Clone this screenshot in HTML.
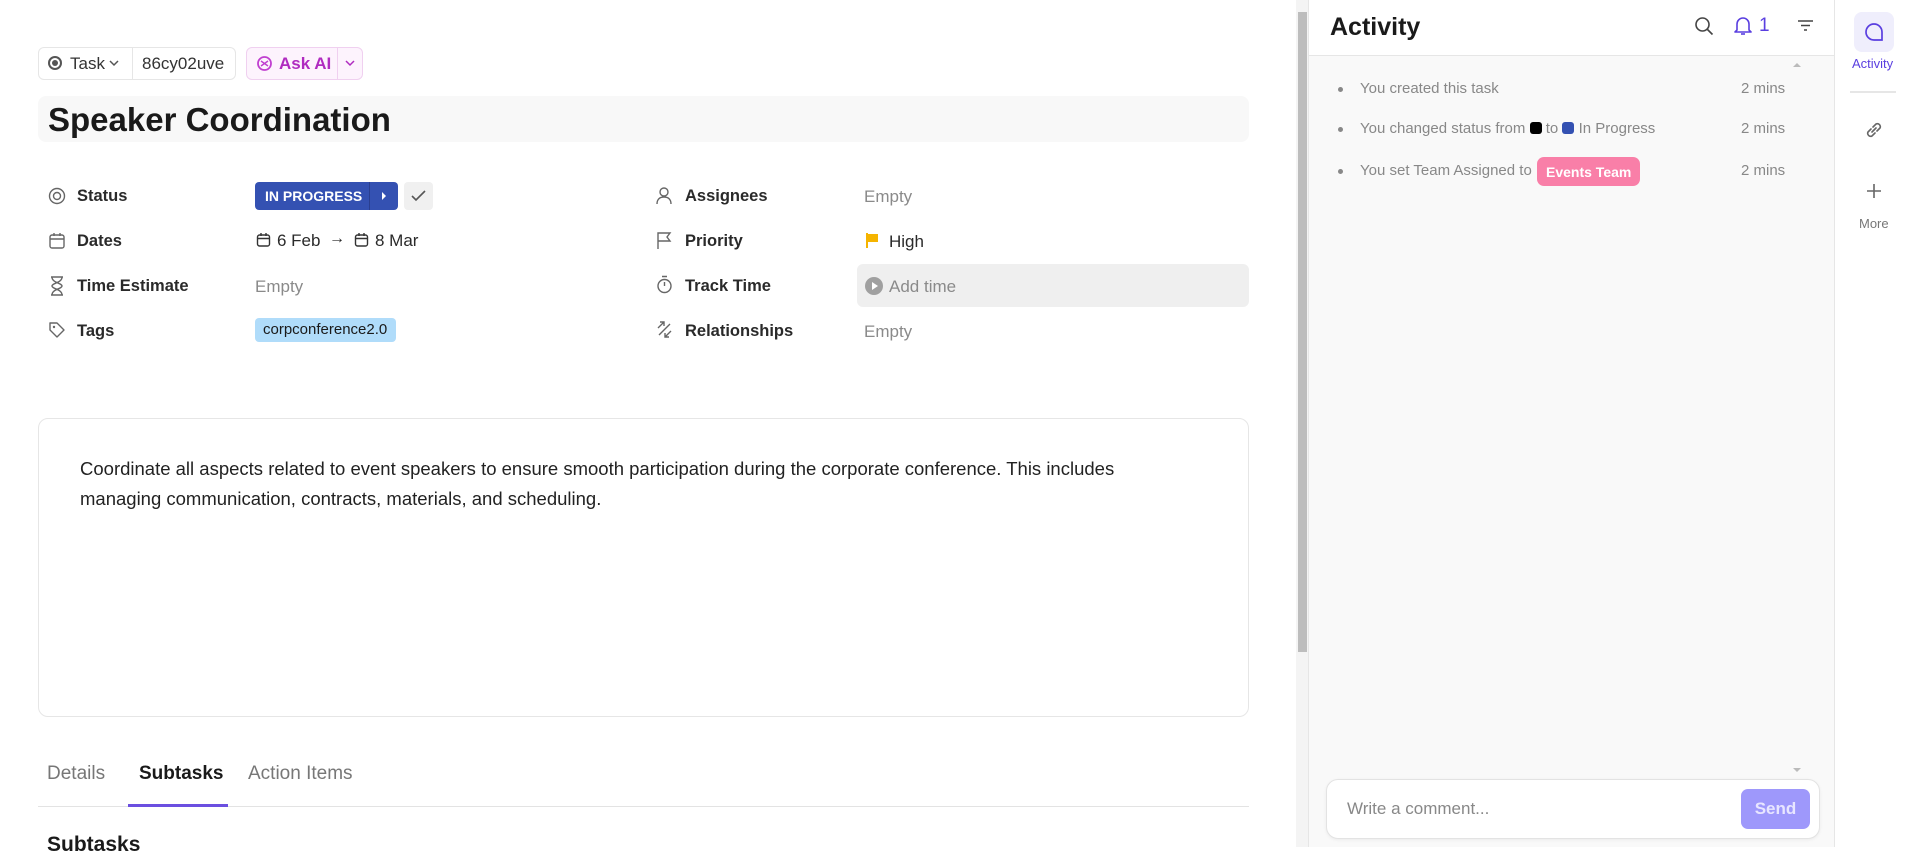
<!DOCTYPE html>
<html><head><meta charset="utf-8"><style>
*{box-sizing:border-box;margin:0;padding:0}
body{width:1905px;height:847px;overflow:hidden;background:#fff;font-family:"Liberation Sans",sans-serif;color:#202020;position:relative}
.a{position:absolute;white-space:nowrap}
.lbl{font-size:16.5px;font-weight:bold;color:#2a2a2a}
.val{font-size:17px;color:#2a2a2a}
.emp{font-size:17px;color:#8a8a8a}
svg{display:block}
.act{font-size:15px;color:#888}
</style></head><body>
<!-- top buttons -->
<div class="a" style="left:38px;top:47px;width:198px;height:33px;border:1px solid #e6e6e6;border-radius:6px"></div>
<div class="a" style="left:132px;top:47px;width:1px;height:33px;background:#e6e6e6"></div>
<div class="a" style="left:48px;top:56px;width:14px;height:14px;border:2px solid #555;border-radius:50%"><div style="margin:2px;width:6px;height:6px;background:#555;border-radius:50%"></div></div>
<div class="a val" style="left:70px;top:54px;font-size:17px;color:#333">Task</div>
<svg class="a" style="left:109px;top:59px" width="10" height="8"><path d="M1 2l4 4 4-4" stroke="#555" stroke-width="1.5" fill="none"/></svg>
<div class="a val" style="left:142px;top:54px;color:#333">86cy02uve</div>
<div class="a" style="left:246px;top:47px;width:117px;height:33px;border:1px solid #f0d0f0;background:#fdf3fd;border-radius:6px"></div>
<div class="a" style="left:337px;top:47px;width:1px;height:33px;background:#f0d0f0"></div>
<svg class="a" style="left:256px;top:55px" width="17" height="17"><circle cx="8.5" cy="8.5" r="6.5" stroke="#c03fd0" stroke-width="1.8" fill="none"/><path d="M5 6l7 5M5 11l7-5" stroke="#c03fd0" stroke-width="1.4"/></svg>
<div class="a" style="left:279px;top:54px;font-size:17px;color:#b02bc0;font-weight:bold">Ask AI</div>
<svg class="a" style="left:345px;top:59px" width="10" height="8"><path d="M1 2l4 4 4-4" stroke="#b02bc0" stroke-width="1.5" fill="none"/></svg>
<!-- title -->
<div class="a" style="left:38px;top:96px;width:1211px;height:46px;background:#f8f8f8;border-radius:8px"></div>
<div class="a" style="left:48px;top:101px;font-size:33px;font-weight:bold;color:#1a1a1a">Speaker Coordination</div>
<!-- rows left -->
<svg class="a" style="left:48px;top:187px" width="18" height="18"><circle cx="9" cy="9" r="7.5" stroke="#666" stroke-width="1.4" fill="none"/><circle cx="9" cy="9" r="3.5" stroke="#666" stroke-width="1.4" fill="none"/></svg>
<div class="a lbl" style="left:77px;top:187px">Status</div>
<div class="a" style="left:255px;top:182px;width:143px;height:28px;background:#3451b2;border-radius:4px"></div>
<div class="a" style="left:369px;top:182px;width:1px;height:28px;background:#2a3f90"></div>
<div class="a" style="left:265px;top:188px;font-size:14px;font-weight:bold;color:#fff">IN PROGRESS</div>
<svg class="a" style="left:380px;top:191px" width="8" height="10"><path d="M2 1l4 4-4 4z" fill="#fff"/></svg>
<div class="a" style="left:404px;top:182px;width:29px;height:28px;background:#f0f0f0;border-radius:4px"></div>
<svg class="a" style="left:410px;top:188px" width="17" height="16"><path d="M2 8l4 4 9-9" stroke="#555" stroke-width="1.6" fill="none"/></svg>

<svg class="a" style="left:48px;top:232px" width="18" height="18"><rect x="2" y="3" width="14" height="13" rx="2" stroke="#666" stroke-width="1.4" fill="none"/><path d="M2 7h14M6 1v3M12 1v3" stroke="#666" stroke-width="1.4"/></svg>
<div class="a lbl" style="left:77px;top:232px">Dates</div>
<svg class="a" style="left:256px;top:232px" width="15" height="16"><rect x="1.5" y="3" width="12" height="11" rx="2" stroke="#333" stroke-width="1.4" fill="none"/><path d="M1.5 6.5h12M5 1v3M10 1v3" stroke="#333" stroke-width="1.4"/></svg>
<div class="a val" style="left:277px;top:231px">6 Feb</div>
<div class="a val" style="left:329px;top:230px;font-size:16px">→</div>
<svg class="a" style="left:354px;top:232px" width="15" height="16"><rect x="1.5" y="3" width="12" height="11" rx="2" stroke="#333" stroke-width="1.4" fill="none"/><path d="M1.5 6.5h12M5 1v3M10 1v3" stroke="#333" stroke-width="1.4"/></svg>
<div class="a val" style="left:375px;top:231px">8 Mar</div>

<svg class="a" style="left:49px;top:276px" width="16" height="20"><path d="M2 1h12M2 19h12M3 1c0 6 10 6 10 9s-10 3-10 9M13 1c0 6-10 6-10 9s10 3 10 9" stroke="#666" stroke-width="1.4" fill="none"/></svg>
<div class="a lbl" style="left:77px;top:277px">Time Estimate</div>
<div class="a emp" style="left:255px;top:277px">Empty</div>

<svg class="a" style="left:48px;top:321px" width="18" height="18"><path d="M2 2h7l7 7-7 7-7-7z" stroke="#666" stroke-width="1.4" fill="none" stroke-linejoin="round"/><circle cx="6" cy="6" r="1.2" fill="#666"/></svg>
<div class="a lbl" style="left:77px;top:322px">Tags</div>
<div class="a" style="left:255px;top:318px;width:141px;height:24px;background:#b0dcfa;border-radius:4px;font-size:15px;color:#1a1a1a;padding:3px 0 0 8px">corpconference2.0</div>

<!-- rows right -->
<svg class="a" style="left:656px;top:186px" width="16" height="19"><circle cx="8" cy="6" r="4" stroke="#666" stroke-width="1.4" fill="none"/><path d="M1 18c0-5 3-7 7-7s7 2 7 7" stroke="#666" stroke-width="1.4" fill="none"/></svg>
<div class="a lbl" style="left:685px;top:187px">Assignees</div>
<div class="a emp" style="left:864px;top:187px">Empty</div>
<svg class="a" style="left:656px;top:231px" width="16" height="19"><path d="M2 18V2h12l-3 4 3 4H2" stroke="#666" stroke-width="1.4" fill="none"/></svg>
<div class="a lbl" style="left:685px;top:232px">Priority</div>
<svg class="a" style="left:865px;top:232px" width="15" height="17"><path d="M2 1v15" stroke="#f5b400" stroke-width="2"/><path d="M3 2h10v8H3z" fill="#f5b400"/></svg>
<div class="a val" style="left:889px;top:232px">High</div>
<div class="a" style="left:857px;top:264px;width:392px;height:43px;background:#efefef;border-radius:6px"></div>
<svg class="a" style="left:656px;top:275px" width="17" height="19"><circle cx="8.5" cy="11" r="6.5" stroke="#666" stroke-width="1.4" fill="none"/><path d="M6 1.5h5M8.5 7v4" stroke="#666" stroke-width="1.4"/></svg>
<div class="a lbl" style="left:685px;top:277px">Track Time</div>
<svg class="a" style="left:864px;top:276px" width="20" height="20"><circle cx="10" cy="10" r="9" fill="#a0a0a0"/><path d="M8 6l6 4-6 4z" fill="#fff"/></svg>
<div class="a emp" style="left:889px;top:277px">Add time</div>
<svg class="a" style="left:656px;top:320px" width="17" height="19"><path d="M2 8l6-6M4 2h4v4M15 11l-6 6M13 17H9v-4M3 15L14 4" stroke="#666" stroke-width="1.4" fill="none"/></svg>
<div class="a lbl" style="left:685px;top:322px">Relationships</div>
<div class="a emp" style="left:864px;top:322px">Empty</div>

<!-- description -->
<div class="a" style="left:38px;top:418px;width:1211px;height:299px;border:1px solid #e6e6e6;border-radius:10px"></div>
<div class="a" style="left:80px;top:454px;width:1120px;white-space:normal;font-size:18.5px;line-height:30px;color:#222">Coordinate all aspects related to event speakers to ensure smooth participation during the corporate conference. This includes managing communication, contracts, materials, and scheduling.</div>

<!-- tabs -->
<div class="a" style="left:47px;top:763px;font-size:19px;color:#777">Details</div>
<div class="a" style="left:139px;top:763px;font-size:19px;color:#1a1a1a;font-weight:bold">Subtasks</div>
<div class="a" style="left:248px;top:763px;font-size:19px;color:#777">Action Items</div>
<div class="a" style="left:38px;top:806px;width:1211px;height:1px;background:#e3e3e3"></div>
<div class="a" style="left:128px;top:804px;width:100px;height:3px;background:#6b4fe0"></div>
<div class="a" style="left:47px;top:833px;font-size:21px;font-weight:bold;color:#1a1a1a">Subtasks</div>

<!-- scrollbar -->
<div class="a" style="left:1296px;top:0;width:12px;height:847px;background:#f4f4f4"></div>
<div class="a" style="left:1298px;top:12px;width:9px;height:640px;background:#bdbdbd"></div>

<!-- activity panel -->
<div class="a" style="left:1308px;top:0;width:527px;height:847px;background:#f9f9f9;border-left:1px solid #e6e6e6;border-right:1px solid #e6e6e6"></div>
<div class="a" style="left:1309px;top:0;width:525px;height:56px;background:#fff;border-bottom:1px solid #e6e6e6"></div>
<div class="a" style="left:1330px;top:13px;font-size:25px;font-weight:bold;color:#1a1a1a">Activity</div>
<svg class="a" style="left:1694px;top:16px" width="20" height="20"><circle cx="8.5" cy="8.5" r="6.5" stroke="#444" stroke-width="1.6" fill="none"/><path d="M13.5 13.5l5 5" stroke="#444" stroke-width="1.6"/></svg>
<svg class="a" style="left:1734px;top:15px" width="18" height="21"><path d="M3 15V9a6 6 0 0112 0v6l2 2H1z" stroke="#5a3fe0" stroke-width="1.6" fill="none" stroke-linejoin="round"/><path d="M7 19h4" stroke="#5a3fe0" stroke-width="1.6"/></svg>
<div class="a" style="left:1759px;top:15px;font-size:19px;color:#5a3fe0">1</div>
<svg class="a" style="left:1797px;top:19px" width="17" height="13"><path d="M1 2h15M4 6.5h9M7 11h3" stroke="#444" stroke-width="1.6"/></svg>
<div class="a" style="left:1793px;top:59px;width:0;height:0;border:4px solid transparent;border-bottom-color:#bbb"></div>
<div class="a" style="left:1793px;top:768px;width:0;height:0;border:4px solid transparent;border-top-color:#bbb"></div>

<div class="a" style="left:1338px;top:87px;width:5px;height:5px;border-radius:50%;background:#888"></div>
<div class="a act" style="left:1360px;top:80px">You created this task</div>
<div class="a act" style="left:1741px;top:80px">2 mins</div>
<div class="a" style="left:1338px;top:127px;width:5px;height:5px;border-radius:50%;background:#888"></div>
<div class="a act" style="left:1360px;top:120px">You changed status from <span style="display:inline-block;width:12px;height:12px;background:#000;border-radius:3px;vertical-align:-1px"></span> to <span style="display:inline-block;width:12px;height:12px;background:#3451b2;border-radius:3px;vertical-align:-1px"></span> In Progress</div>
<div class="a act" style="left:1741px;top:120px">2 mins</div>
<div class="a" style="left:1338px;top:169px;width:5px;height:5px;border-radius:50%;background:#888"></div>
<div class="a act" style="left:1360px;top:162px">You set Team Assigned to</div>
<div class="a" style="left:1537px;top:157px;height:29px;background:#f97fa8;border-radius:7px;color:#fff;font-weight:bold;font-size:14px;padding:7px 9px 0 9px">Events Team</div>
<div class="a act" style="left:1741px;top:162px">2 mins</div>

<div class="a" style="left:1326px;top:779px;width:494px;height:60px;background:#fff;border:1px solid #e3e3e3;border-radius:12px;box-shadow:0 1px 3px rgba(0,0,0,.06)"></div>
<div class="a" style="left:1347px;top:799px;font-size:17px;color:#888">Write a comment...</div>
<div class="a" style="left:1741px;top:789px;width:69px;height:40px;background:#9e98fb;border-radius:7px;color:#e8e6ff;font-weight:bold;font-size:17px;text-align:center;padding-top:10px">Send</div>

<!-- right sidebar -->
<div class="a" style="left:1854px;top:12px;width:40px;height:40px;background:#efeefc;border-radius:8px"></div>
<svg class="a" style="left:1864px;top:22px" width="20" height="20"><path d="M10 2a8 8 0 100 16h8v-8a8 8 0 00-8-8z" stroke="#5a3fe0" stroke-width="1.7" fill="none"/></svg>
<div class="a" style="left:1852px;top:56px;font-size:13px;color:#5a3fe0">Activity</div>
<div class="a" style="left:1850px;top:91px;width:46px;height:2px;background:#e6e6e6"></div>
<svg class="a" style="left:1864px;top:120px" width="20" height="20"><path d="M8 12l4-4M7 9l-3 3a3 3 0 004 4l3-3M13 11l3-3a3 3 0 00-4-4L9 7" stroke="#666" stroke-width="1.6" fill="none" stroke-linecap="round"/></svg>
<svg class="a" style="left:1866px;top:183px" width="16" height="16"><path d="M8 1v14M1 8h14" stroke="#666" stroke-width="1.6"/></svg>
<div class="a" style="left:1859px;top:216px;font-size:13px;color:#777">More</div>
</body></html>
